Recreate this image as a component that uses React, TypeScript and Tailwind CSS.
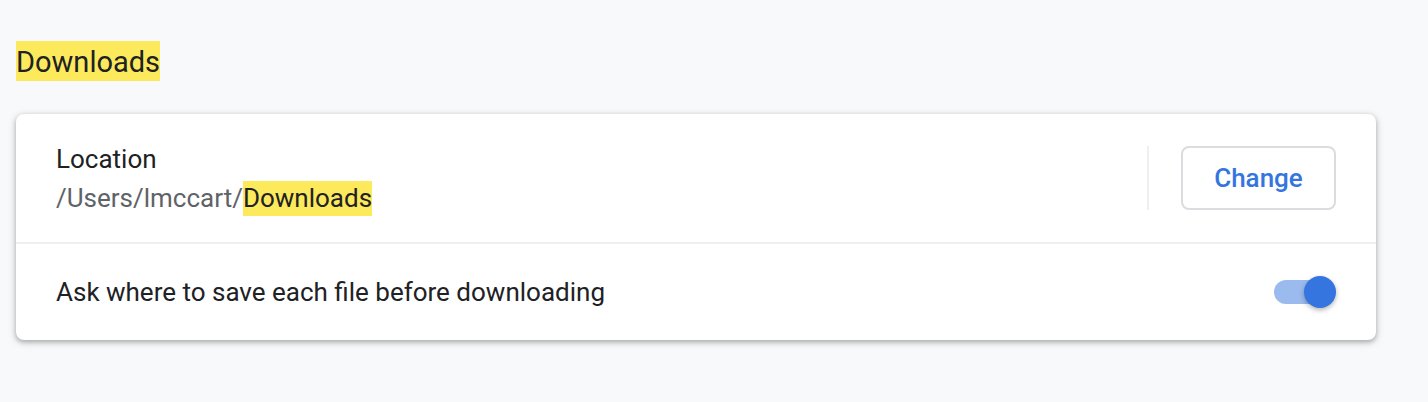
import React from "react";

export default function App() {
  return (
    <div
      className="min-h-screen w-full bg-[#f8f9fa] px-4 pt-[43px] text-[#202124]"
      style={{ fontFamily: "Roboto, 'Liberation Sans', sans-serif" }}
    >
      <h2 className="text-[29px] leading-[38px] font-normal">
        <span className="bg-[#fde95c] pt-[4px] pb-[2px]">Downloads</span>
      </h2>

      <div className="mt-[33px] w-[1360px] rounded-[8px] bg-white shadow-[0_2px_4px_0_rgba(60,64,67,0.3),0_2px_6px_2px_rgba(60,64,67,0.15)]">
        <div className="flex h-[128px] items-center px-[40px]">
          <div className="flex flex-1 flex-col text-[26px] leading-[38px]">
            <div className="text-[#202124]">Location</div>
            <div className="mt-[1px] text-[#5f6368]">
              /Users/lmccart/
              <span className="bg-[#fde95c] pt-[2px] pb-[3px] text-[#202124]">Downloads</span>
            </div>
          </div>
          <div className="mr-[32px] h-[64px] w-[2px] bg-[#efefef]" />
          <button className="flex h-[64px] w-[155px] items-center justify-center rounded-[8px] border-2 border-[#dcdce0] bg-white text-[26px] font-medium text-[#3575e0]">
            Change
          </button>
        </div>

        <div className="h-[2px] w-full bg-[#efefef]" />

        <div className="flex h-[96px] items-center px-[40px]">
          <div className="flex-1 text-[26px] leading-[38px] text-[#202124]">
            Ask where to save each file before downloading
          </div>
          <div className="relative h-[32px] w-[62px]">
            <div className="absolute left-0 top-[4px] h-[24px] w-[56px] rounded-full bg-[#9bbbef]" />
            <div className="absolute right-0 top-0 h-[32px] w-[32px] rounded-full bg-[#3575e0] shadow-[0_2px_5px_rgba(0,0,0,0.3)]" />
          </div>
        </div>
      </div>
    </div>
  );
}
